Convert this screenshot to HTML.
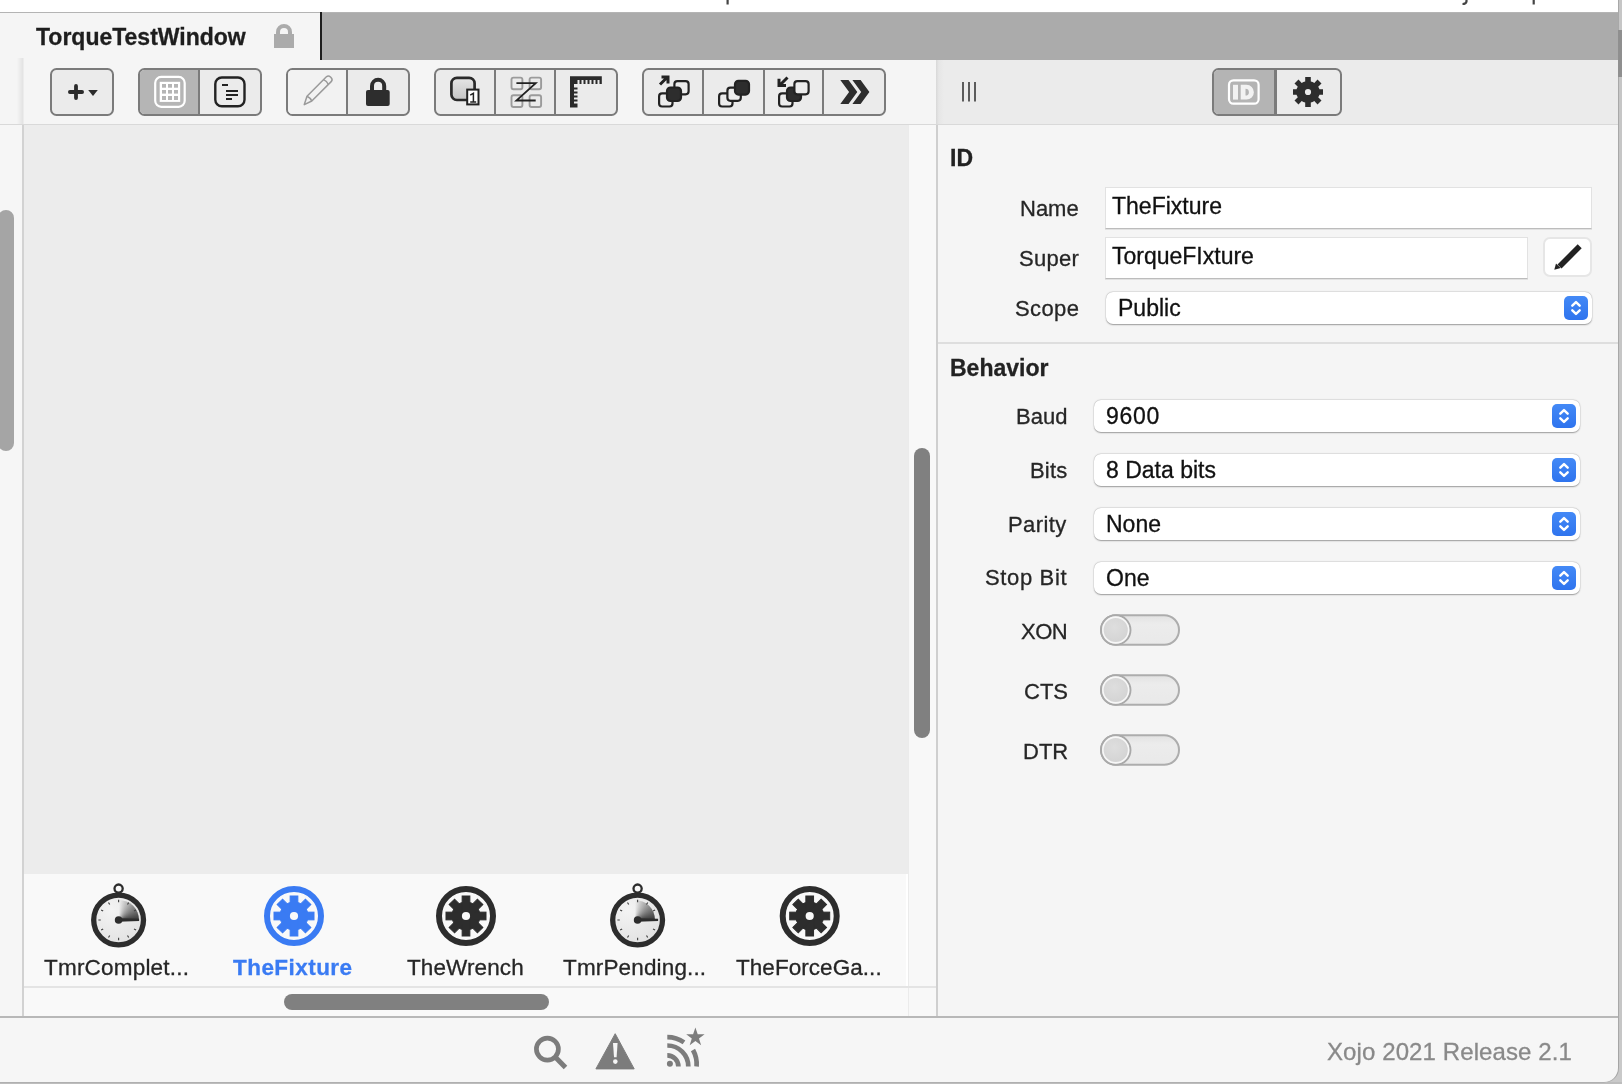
<!DOCTYPE html>
<html><head><meta charset="utf-8">
<style>
*{margin:0;padding:0;box-sizing:border-box}
html,body{width:1622px;height:1084px;overflow:hidden;background:#fff;-webkit-font-smoothing:antialiased;font-family:"Liberation Sans",sans-serif;color:#222}
.a{position:absolute}
.t{position:absolute;white-space:nowrap;line-height:1;will-change:transform;-webkit-text-stroke:0.3px currentColor}
.btn{position:absolute;top:68px;height:48px;border:2px solid #7b7b7b;border-radius:6.5px;background:#ebebeb;overflow:hidden}
.seg{position:absolute;top:0;bottom:0}
.div{position:absolute;top:0;bottom:0;width:2px;background:#7b7b7b}
svg{position:absolute;overflow:visible}
.lbl{position:absolute;white-space:nowrap;line-height:1;will-change:transform;-webkit-text-stroke:0.3px currentColor;font-size:22px;color:#262626;text-align:right}
.pop{position:absolute;height:32px;background:#fff;border-radius:7px;box-shadow:0 0.5px 1.5px rgba(0,0,0,.35),0 0 0 0.5px rgba(0,0,0,.06)}
.step{position:absolute;top:4px;right:4px;width:24px;height:24px;border-radius:5px;background:linear-gradient(#4389f6,#2f74ee)}
.sw{position:absolute;left:1100px;width:80px;height:31px;border-radius:16px;background:#e9e9e9;border:1.5px solid #b3b3b3}
.knob{position:absolute;left:-1.5px;top:-1.5px;width:31px;height:31px;border-radius:50%;background:radial-gradient(circle at 50% 40%,#e2e2e2,#d6d6d6);border:1.5px solid #b0b0b0;box-shadow:inset 0 0 0 1.5px #f4f4f4}
</style></head>
<body>
<!-- top strip -->
<div class="a" style="left:0;top:0;width:1622px;height:12px;background:#fff"></div>
<div class="a" style="left:0;top:12px;width:1618px;height:1px;background:#b4b4b4"></div>
<svg style="left:0;top:0" width="1" height="1">
  <rect x="726.5" y="0" width="2.2" height="4.5" fill="#444"/>
  <path d="M1466.5 0V1.5Q1466 4 1462.5 4" fill="none" stroke="#444" stroke-width="2.2"/>
  <rect x="1532.6" y="0" width="2.2" height="4.5" fill="#444"/>
</svg>
<!-- tab bar -->
<div class="a" style="left:0;top:13px;width:320px;height:47px;background:#f5f5f5"></div>
<div class="a" style="left:320px;top:12px;width:2px;height:48px;background:#1e1e1e"></div>
<div class="a" style="left:322px;top:13px;width:1296px;height:47px;background:#ababab"></div>
<div class="t" style="left:36px;top:26px;font-size:23px;font-weight:bold;color:#1e1e1e">TorqueTestWindow</div>

<!-- toolbar -->
<div class="a" style="left:0;top:60px;width:936px;height:64px;background:#f5f5f5"></div>
<div class="a" style="left:938px;top:60px;width:680px;height:64px;background:#ebebeb"></div>
<div class="a" style="left:0;top:124px;width:1618px;height:1px;background:#d9d9d9"></div>

<!-- toolbar buttons -->
<div class="btn" style="left:50px;width:64px"></div>
<svg style="left:0;top:0" width="1" height="1">
  <path d="M69.9 92H82.1M76 85.9V98.1" stroke="#2b2b2b" stroke-width="3.8" stroke-linecap="round" fill="none"/>
  <path d="M88.2 90L97.8 90L93 96Z" fill="#2b2b2b"/>
</svg>

<div class="btn" style="left:138px;width:124px"><div class="seg" style="left:0;width:58px;background:#b5b5b5"></div><div class="div" style="left:58px"></div></div>
<svg style="left:0;top:0" width="1" height="1">
  <rect x="155.2" y="76.9" width="29.5" height="29.9" rx="6" fill="none" stroke="#fff" stroke-width="2.2"/>
  <rect x="159.7" y="81.8" width="20.5" height="20.1" fill="#fff"/>
  <g fill="#b5b5b5">
   <rect x="162" y="84" width="4" height="3.7"/><rect x="168" y="84" width="4" height="3.7"/><rect x="174" y="84" width="4" height="3.7"/>
   <rect x="162" y="90" width="4" height="3.6"/><rect x="168" y="90" width="4" height="3.6"/><rect x="174" y="90" width="4" height="3.6"/>
   <rect x="162" y="96" width="4" height="4"/><rect x="168" y="96" width="4" height="4"/><rect x="174" y="96" width="4" height="4"/>
  </g>
  <rect x="215.3" y="77.5" width="29.2" height="28.7" rx="6.5" fill="none" stroke="#222" stroke-width="2.4"/>
  <g fill="#222"><rect x="222" y="84" width="6" height="2"/><rect x="226" y="90" width="12" height="2"/><rect x="226" y="94" width="12" height="2"/><rect x="226" y="98" width="6" height="2"/></g>
</svg>

<div class="btn" style="left:286px;width:124px"><div class="seg" style="left:0;width:58px;background:#f2f2f2"></div><div class="div" style="left:58px"></div></div>
<svg style="left:0;top:0" width="1" height="1">
  <g fill="none" stroke="#9a9a9a" stroke-width="1.5" stroke-linejoin="round">
    <path d="M304.3 104.6L307 96.2L326.4 76.8Q328.4 75 330.5 77L331.2 77.7Q333 79.8 331.2 81.6L311.8 101Z"/>
    <path d="M307 96.2Q310.5 97.8 311.8 101"/>
    <path d="M323.5 79.6Q327 81 328.4 84.5"/>
  </g>
  <path d="M372 91V85.9A6.1 6.1 0 0 1 384.2 85.9V91" fill="none" stroke="#2d2d2d" stroke-width="4"/>
  <rect x="366" y="90" width="23.7" height="16" rx="2" fill="#2d2d2d"/>
</svg>

<div class="btn" style="left:434px;width:184px"><div class="div" style="left:58px"></div><div class="div" style="left:118px"></div></div>
<svg style="left:0;top:0" width="1" height="1">
  <defs><linearGradient id="g1" x1="0" y1="0" x2="0" y2="1"><stop offset="0" stop-color="#e6e6e6"/><stop offset="1" stop-color="#c4c4c4"/></linearGradient></defs>
  <rect x="451.4" y="77.8" width="23.2" height="22.2" rx="5.5" fill="url(#g1)" stroke="#2a2a2a" stroke-width="2.7"/>
  <rect x="467.2" y="89.6" width="11.3" height="14.8" fill="#fff" stroke="#222" stroke-width="2"/>
  <path d="M470.2 95.2L473.4 93.4V101.7M470.2 101.9H476.2" fill="none" stroke="#222" stroke-width="1.5"/>
  <g fill="none" stroke="#9b9b9b" stroke-width="1.9">
    <rect x="511.5" y="77.6" width="10.9" height="11.6" rx="2"/><rect x="529.6" y="77.6" width="11.5" height="11.6" rx="2"/>
    <rect x="511.5" y="95.2" width="10.9" height="11.8" rx="2"/><rect x="529.6" y="95.2" width="11.5" height="11.8" rx="2"/>
  </g>
  <path d="M516.4 83.2H535.7L516.4 100.5H535.7" fill="none" stroke="#222" stroke-width="1.8"/>
  <path d="M570 76.2H601.8V84H599.5V80H597.5V84H595.5V80H593.5V84H591.5V80H589.5V84H587.5V80H585.5V84H583.5V80H581.5V84H579.5V80H577.5V84H574V87.5H577.5V89.5H574V91.5H577.5V93.5H574V95.5H577.5V97.5H574V99.5H577.5V101.5H574V103.5H577.5V107.5H570Z" fill="#2a2a2a"/>
</svg>

<div class="btn" style="left:642px;width:244px"><div class="div" style="left:58px"></div><div class="div" style="left:119px"></div><div class="div" style="left:178px"></div></div>
<svg style="left:0;top:0" width="1" height="1">
  <g stroke="#222" stroke-width="2.2">
    <rect x="674.4" y="81.1" width="14.2" height="13.2" rx="3" fill="#ececec"/>
    <rect x="659.1" y="93.4" width="13.4" height="13.1" rx="3" fill="#ececec"/>
    <rect x="667" y="87.5" width="14" height="13.5" rx="3.5" fill="#2d2d2d"/>
    <path d="M660 84.5L667.5 77M661.5 77H668V83.5" fill="none" stroke-width="3"/>
  </g>
  <g stroke="#222" stroke-width="2.2">
    <rect x="719.1" y="93.4" width="13.4" height="13.1" rx="3" fill="#ececec"/>
    <rect x="727.4" y="87.7" width="13.4" height="13.1" rx="3" fill="#ececec"/>
    <rect x="735" y="80.8" width="14" height="13.8" rx="3.5" fill="#2d2d2d"/>
  </g>
  <g stroke="#222" stroke-width="2.2">
    <rect x="779.1" y="93.4" width="13.4" height="13.1" rx="3" fill="#ececec"/>
    <rect x="787" y="87.5" width="14" height="13.5" rx="3.5" fill="#2d2d2d"/>
    <rect x="794.4" y="81.1" width="14.2" height="13.2" rx="3" fill="#ececec"/>
    <path d="M787.5 77.5L780 85M779 78.8V85.5H786" fill="none" stroke-width="3"/>
  </g>
  <path d="M840.3 80H848.5L857.3 92L848.5 104H840.3L849.1 92Z M852.4 80H860.6L869.4 92L860.6 104H852.4L861.2 92Z" fill="#2d2d2d"/>
</svg>

<!-- right toolbar -->
<svg style="left:0;top:0" width="1" height="1">
  <g stroke="#555" stroke-width="1.9"><path d="M963 82V101.5M969 82V101.5M975 82V101.5"/></g>
</svg>
<div class="btn" style="left:1212px;width:130px"><div class="seg" style="left:0;width:60px;background:#b4b4b4"></div><div class="div" style="left:60px;width:3px"></div></div>
<svg style="left:0;top:0" width="1" height="1">
  <rect x="1229" y="80.3" width="29.6" height="23.4" rx="4.5" fill="none" stroke="#fff" stroke-width="2.2"/>
  <path d="M1233 84.8H1238V99.6H1233Z" fill="#f2f2f2"/>
  <path d="M1240.7 84.8H1246.5A7.4 7.4 0 0 1 1246.5 99.6H1240.7Z M1245.5 88.8V95.6A3.4 3.4 0 0 0 1245.5 88.8Z" fill="#f2f2f2" fill-rule="evenodd"/>
  <g transform="translate(1308 92)">
    <path id="gear" d="M-2.8 -15H2.8V-10.5A11 11 0 0 1 6.3 -9L9.5 -12.5L13.5 -8.5L10.2 -5.3A11 11 0 0 1 11.5 -2.8H15V2.8H11.5A11 11 0 0 1 10.2 5.3L13.5 8.5L9.5 12.5L6.3 9A11 11 0 0 1 2.8 10.5V15H-2.8V10.5A11 11 0 0 1 -6.3 9L-9.5 12.5L-13.5 8.5L-10.2 5.3A11 11 0 0 1 -11.5 2.8H-15V-2.8H-11.5A11 11 0 0 1 -10.2 -5.3L-13.5 -8.5L-9.5 -12.5L-6.3 -9A11 11 0 0 1 -2.8 -10.5Z M0 -3.1A3.1 3.1 0 1 0 0 3.1A3.1 3.1 0 1 0 0 -3.1Z" fill="#2d2d2d" fill-rule="evenodd"/>
  </g>
</svg>
<svg style="left:0;top:0" width="1" height="1">
  <path d="M278 35V32A6 6 0 0 1 290 32V35" fill="none" stroke="#ababab" stroke-width="4"/>
  <rect x="274" y="34" width="20" height="14" fill="#ababab"/>
</svg>

<!-- left strip -->
<div class="a" style="left:0;top:125px;width:23px;height:891px;background:#f6f6f6"></div>
<div class="a" style="left:-2.2px;top:210px;width:16px;height:241px;background:#a5a5a5;border-radius:8px"></div>
<div class="a" style="left:22px;top:125px;width:2px;height:891px;background:#d2d2d2"></div>

<!-- canvas -->
<div class="a" style="left:24px;top:125px;width:884px;height:749px;background:#ececec"></div>
<!-- vscroll -->
<div class="a" style="left:908px;top:125px;width:28px;height:891px;background:#f8f8f8;border-left:1px solid #ebebeb"></div>
<div class="a" style="left:914px;top:448px;width:16px;height:290px;background:#808080;border-radius:8px"></div>
<div class="a" style="left:936px;top:125px;width:2px;height:891px;background:#cfcfcf"></div>
<div class="a" style="left:936px;top:60px;width:8px;height:64px;background:linear-gradient(90deg,#d8d8d8,#e6e6e6 35%,#ebebeb)"></div>
<div class="a" style="left:17px;top:58px;width:7px;height:66px;background:linear-gradient(90deg,rgba(0,0,0,0),rgba(0,0,0,.07) 85%,rgba(0,0,0,0))"></div>

<!-- tray -->
<div class="a" style="left:24px;top:874px;width:882px;height:112px;background:#f9f9f9"></div>
<div class="a" style="left:24px;top:986px;width:912px;height:2px;background:#e4e4e4"></div>
<div class="a" style="left:24px;top:988px;width:884px;height:28px;background:#f9f9f9"></div>
<div class="a" style="left:284px;top:994px;width:265px;height:16px;background:#808080;border-radius:8px"></div>

<!-- tray items -->
<div class="a" style="left:93.6px;top:895px;width:50px;height:50px;border-radius:50%;background:radial-gradient(circle at 35% 30%,#f4f4f4,#dcdcdc)"></div>
<div class="a" style="left:98.6px;top:900px;width:40px;height:40px;border-radius:50%;background:conic-gradient(rgba(45,45,45,0) 0deg,rgba(45,45,45,.95) 90deg,rgba(0,0,0,0) 90deg)"></div>
<div class="a" style="left:610.1px;top:895px;width:50px;height:50px;border-radius:50%;background:radial-gradient(circle at 35% 30%,#f4f4f4,#dcdcdc)"></div>
<div class="a" style="left:615.1px;top:900px;width:40px;height:40px;border-radius:50%;background:conic-gradient(rgba(45,45,45,0) 0deg,rgba(45,45,45,.95) 90deg,rgba(0,0,0,0) 90deg)"></div>
<svg style="left:0;top:0" width="1" height="1">
  <defs>
    <g id="timer">
      <circle cx="0" cy="0" r="24.9" fill="none" stroke="#2d2d2d" stroke-width="5.3"/>
      <circle cx="0" cy="-31.4" r="4.1" fill="none" stroke="#2d2d2d" stroke-width="2.3"/>
      <g stroke="#444" stroke-width="1.15">
        <path d="M0.00 -20.20L0.00 -17.80M10.10 -17.49L8.90 -15.42M17.49 -10.10L15.42 -8.90M20.20 -0.00L17.80 -0.00M17.49 10.10L15.42 8.90M10.10 17.49L8.90 15.42M0.00 20.20L0.00 17.80M-10.10 17.49L-8.90 15.42M-17.49 10.10L-15.42 8.90M-20.20 0.00L-17.80 0.00M-17.49 -10.10L-15.42 -8.90M-10.10 -17.49L-8.90 -15.42"/>
      </g>
      <path d="M0 -1.8L20.5 -1.2V1L0 1.8Z" fill="#2d2d2d"/>
      <circle cx="0" cy="0" r="3.8" fill="#2d2d2d"/>
    </g>
    <g id="gearT">
      <circle r="27" fill="none" stroke-width="6"/>
      <circle r="14"/>
      <rect x="-20" y="-3.85" width="40" height="7.7"/>
      <rect x="-20" y="-3.85" width="40" height="7.7" transform="rotate(45)"/>
      <rect x="-20" y="-3.85" width="40" height="7.7" transform="rotate(90)"/>
      <rect x="-20" y="-3.85" width="40" height="7.7" transform="rotate(135)"/>
      <circle r="4.1" fill="#f9f9f9" stroke="none"/>
    </g>
  </defs>
  <use href="#timer" x="118.6" y="920"/>
  <use href="#timer" x="637.6" y="920"/>
  <g fill="#3a7bf3" stroke="#3a7bf3" transform="translate(294 916)"><use href="#gearT"/></g>
  <g fill="#2d2d2d" stroke="#2d2d2d" transform="translate(466 916)"><use href="#gearT"/></g>
  <g fill="#2d2d2d" stroke="#2d2d2d" transform="translate(809.7 916)"><use href="#gearT"/></g>
</svg>
<div class="t" style="left:44px;top:957.4px;font-size:22.5px;letter-spacing:0.2px;color:#262626">TmrComplet...</div>
<div class="t" style="left:233px;top:957.4px;font-size:22.5px;letter-spacing:0.45px;font-weight:bold;color:#3a7bf3">TheFixture</div>
<div class="t" style="left:407px;top:957.4px;font-size:22.5px;letter-spacing:0.1px;color:#262626">TheWrench</div>
<div class="t" style="left:563px;top:957.4px;font-size:22.5px;letter-spacing:0.15px;color:#262626">TmrPending...</div>
<div class="t" style="left:735.5px;top:957.4px;font-size:22.5px;letter-spacing:0.05px;color:#262626">TheForceGa...</div>

<!-- status bar -->
<div class="a" style="left:0;top:1016px;width:1618px;height:2px;background:#b8b8b8"></div>
<div class="a" style="left:1580px;top:1040px;width:42px;height:44px;background:#c9c9c9"></div>
<div class="a" style="left:0;top:1082px;width:1622px;height:2px;background:#bdbdbd"></div>
<div class="a" style="left:0;top:1018px;width:1619px;height:65px;background:#f6f6f6;border-right:1px solid #a5a5a5;border-bottom:1px solid #b0b0b0;border-bottom-right-radius:15px"></div>
<div class="t" style="left:1327px;top:1040px;font-size:24px;letter-spacing:0.1px;color:#898989">Xojo 2021 Release 2.1</div>

<!-- status icons -->
<svg style="left:0;top:0" width="1" height="1">
  <g fill="none" stroke="#7c7c7c" stroke-width="4.7">
    <circle cx="547.4" cy="1049.1" r="11"/>
    <path d="M556.2 1058.1L565.5 1067.6" stroke-width="5"/>
  </g>
  <path d="M615.2 1033.7L634.2 1068.9H595.9Z" fill="#7c7c7c" stroke="#7c7c7c" stroke-width="1" stroke-linejoin="round"/>
  <path d="M613 1043H617.6L616.6 1057.2H614Z" fill="#f6f6f6"/>
  <circle cx="615.3" cy="1061.6" r="2.3" fill="#f6f6f6"/>
  <g fill="none" stroke="#7c7c7c" stroke-width="4.7">
    <path d="M667.3 1055.4A11.1 11.1 0 0 1 678.4 1066.5"/>
    <path d="M667.3 1045.5A21 21 0 0 1 688.3 1066.5"/>
    <path d="M667.3 1037.2A29.3 29.3 0 0 1 684 1042.4"/>
    <path d="M693 1050A29.3 29.3 0 0 1 696.6 1066.5"/>
  </g>
  <circle cx="669.9" cy="1063.8" r="3" fill="#7c7c7c"/>
  <path d="M695.4 1027.5L697.7 1034.3H704.6L699 1038.5L701.1 1045.3L695.4 1041.1L689.7 1045.3L691.8 1038.5L686.2 1034.3H693.1Z" fill="#7c7c7c"/>
</svg>

<!-- right panel -->
<div class="a" style="left:938px;top:125px;width:680px;height:891px;background:#f5f5f5"></div>
<div class="a" style="left:938px;top:342px;width:680px;height:2px;background:#dedede"></div>
<div class="a" style="left:1618px;top:0;width:4px;height:1040px;background:#c6c6c6;border-left:1px solid #a8a8a8"></div>
<div class="a" style="left:1618px;top:30px;width:4px;height:47px;background:#8f8f8f"></div>

<!-- properties: ID -->
<div class="t" style="left:950px;top:146.5px;font-size:23px;font-weight:bold;color:#222">ID</div>
<div class="lbl" style="right:543px;top:198.2px">Name</div>
<div class="lbl" style="right:543px;top:247.6px;letter-spacing:0.25px">Super</div>
<div class="lbl" style="right:543px;top:297.6px;letter-spacing:0.4px">Scope</div>
<div class="a" style="left:1105px;top:187px;width:487px;height:42px;background:#fff;border:1px solid #e2e2e2;border-bottom:1.5px solid #bcbcbc;box-shadow:0 0.5px 0.5px rgba(0,0,0,.08)"></div>
<div class="t" style="left:1112px;top:195px;font-size:23px;color:#111">TheFixture</div>
<div class="a" style="left:1105px;top:237px;width:423px;height:42px;background:#fff;border:1px solid #e2e2e2;border-bottom:1.5px solid #bcbcbc;box-shadow:0 0.5px 0.5px rgba(0,0,0,.08)"></div>
<div class="t" style="left:1112px;top:244.5px;font-size:23px;color:#111">TorqueFIxture</div>
<div class="a" style="left:1543px;top:237px;width:49px;height:40px;background:#fff;border:2px solid #e6e6e6;border-radius:7px"></div>
<svg style="left:0;top:0" width="1" height="1">
  <path d="M1557.5 264.5L1577.7 244.3L1581.7 248.3L1561.5 268.5Z" fill="#222"/>
  <path d="M1554.3 269.8L1556 263.4L1560.7 268.1Z" fill="#222"/>
</svg>
<div class="pop" style="left:1106px;top:292px;width:486px"><div class="step"></div></div>
<div class="t" style="left:1118px;top:296.5px;font-size:23px;color:#111">Public</div>

<!-- properties: Behavior -->
<div class="t" style="left:950px;top:356.5px;font-size:23px;font-weight:bold;color:#222">Behavior</div>
<div class="lbl" style="right:555px;top:406px">Baud</div>
<div class="lbl" style="right:555px;top:459.6px;letter-spacing:0.2px">Bits</div>
<div class="lbl" style="right:555px;top:513.6px;letter-spacing:0.38px">Parity</div>
<div class="lbl" style="right:555px;top:567.4px;letter-spacing:0.65px">Stop Bit</div>
<div class="lbl" style="right:555px;top:621.4px;letter-spacing:-0.5px">XON</div>
<div class="lbl" style="right:554px;top:681.4px">CTS</div>
<div class="lbl" style="right:554px;top:741.4px">DTR</div>
<div class="pop" style="left:1094px;top:400px;width:486px"><div class="step"></div></div>
<div class="pop" style="left:1094px;top:454px;width:486px"><div class="step"></div></div>
<div class="pop" style="left:1094px;top:508px;width:486px"><div class="step"></div></div>
<div class="pop" style="left:1094px;top:562px;width:486px"><div class="step"></div></div>
<div class="t" style="left:1106px;top:405px;font-size:23px;letter-spacing:0.7px;color:#111">9600</div>
<div class="t" style="left:1106px;top:458.5px;font-size:23px;color:#111">8 Data bits</div>
<div class="t" style="left:1106px;top:512.5px;font-size:23px;color:#111">None</div>
<div class="t" style="left:1106px;top:566.5px;font-size:23px;color:#111">One</div>
<svg style="left:0;top:0" width="1" height="1">
  <defs><g id="chev"><path d="M-3.7 -2.3L0 -5.9L3.7 -2.3M-3.7 2.3L0 5.9L3.7 2.3" fill="none" stroke="#fff" stroke-width="2.4" stroke-linecap="round" stroke-linejoin="round"/></g></defs>
  <use href="#chev" x="1576" y="308"/>
  <use href="#chev" x="1564" y="416"/>
  <use href="#chev" x="1564" y="470"/>
  <use href="#chev" x="1564" y="524"/>
  <use href="#chev" x="1564" y="578"/>
</svg>
<svg style="left:0;top:0" width="1" height="1">
  <defs>
    <radialGradient id="kg" cx="0.45" cy="0.4" r="0.6"><stop offset="0" stop-color="#dedede"/><stop offset="1" stop-color="#d2d2d2"/></radialGradient>
    <linearGradient id="tg" x1="0" y1="0" x2="0" y2="1"><stop offset="0" stop-color="#e2e2e2"/><stop offset="0.3" stop-color="#ececec"/><stop offset="1" stop-color="#e9e9e9"/></linearGradient>
    <g id="sw">
      <rect x="1101" y="-14.75" width="78" height="29.5" rx="14.75" fill="url(#tg)" stroke="#adadad" stroke-width="2"/>
      <circle cx="1115.75" cy="0" r="14.7" fill="url(#kg)" stroke="#a9a9a9" stroke-width="2"/>
      <circle cx="1115.75" cy="0" r="12.9" fill="none" stroke="#f7f7f7" stroke-width="1.6"/>
    </g>
  </defs>
  <use href="#sw" y="630"/>
  <use href="#sw" y="690"/>
  <use href="#sw" y="750"/>
</svg>

</body></html>
